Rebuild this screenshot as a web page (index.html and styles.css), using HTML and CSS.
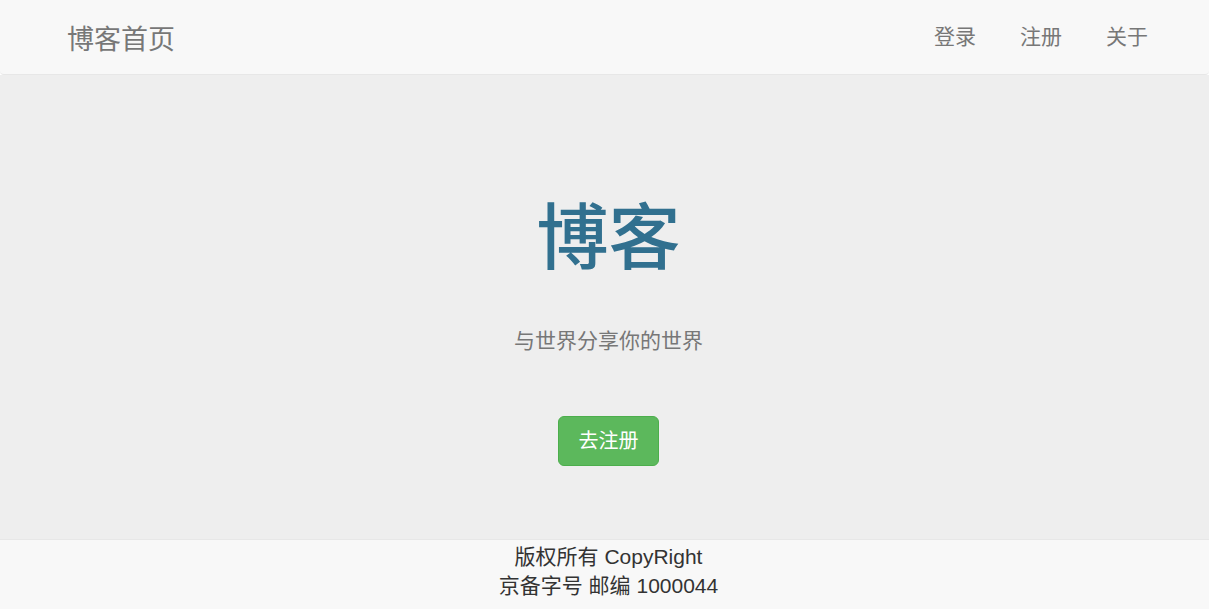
FILE: index.html
```html
<!DOCTYPE html>
<html>
<head>
    <meta charset="utf-8">
    <title>博客首页</title>
    <link rel="stylesheet" href="styles.css">
</head>
<body>
    <nav class="navbar">
        <a class="brand" href="#">博客首页</a>
        <ul class="nav-links">
            <li><a href="#">登录</a></li>
            <li><a href="#">注册</a></li>
            <li><a href="#">关于</a></li>
        </ul>
    </nav>

    <div class="jumbotron">
        <h1 class="title">博客</h1>
        <p class="lead">与世界分享你的世界</p>
        <a class="btn-success" href="#">去注册</a>
    </div>

    <footer class="footer">
        <div>版权所有 CopyRight</div>
        <div>京备字号 邮编 1000044</div>
    </footer>
</body>
</html>
```

FILE: styles.css
```css
body {
    margin: 0;
    font-family: "Liberation Sans", "Noto Sans CJK SC", sans-serif;
    color: #333;
    background-color: #fff;
}

a {
    text-decoration: none;
}

.navbar {
    display: flex;
    justify-content: space-between;
    align-items: center;
    height: 74px;
    padding: 0 39px 0 67px;
    background-color: #f8f8f8;
    border-bottom: 1px solid #e7e7e7;
    border-radius: 0 0 4px 4px;
}

.brand {
    font-size: 27px;
    color: #777;
}

.nav-links {
    display: flex;
    list-style: none;
    margin: 0;
    padding: 0;
}

.nav-links a {
    display: block;
    padding: 0 22px;
    font-size: 21px;
    line-height: 74px;
    color: #777;
}

.nav-links a:hover {
    color: #333;
}

.jumbotron {
    display: flex;
    flex-direction: column;
    align-items: center;
    padding: 123px 0 73px 8px;
    background-color: #eee;
}

.title {
    margin: 0;
    font-size: 72px;
    line-height: 80px;
    font-weight: 500;
    color: #31708f;
}

.lead {
    margin: 48px 0 0;
    font-size: 21px;
    line-height: 30px;
    color: #777;
}

.btn-success {
    margin-top: 60px;
    display: block;
    box-sizing: border-box;
    width: 101px;
    height: 50px;
    line-height: 48px;
    text-align: center;
    font-size: 20px;
    color: #fff;
    background-color: #5cb85c;
    border: 1px solid #4cae4c;
    border-radius: 6px;
}

.footer {
    padding: 2px 0 9px 8px;
    background-color: #f8f8f8;
    border-top: 1px solid #e7e7e7;
    text-align: center;
    font-size: 21px;
    line-height: 29px;
}
```
